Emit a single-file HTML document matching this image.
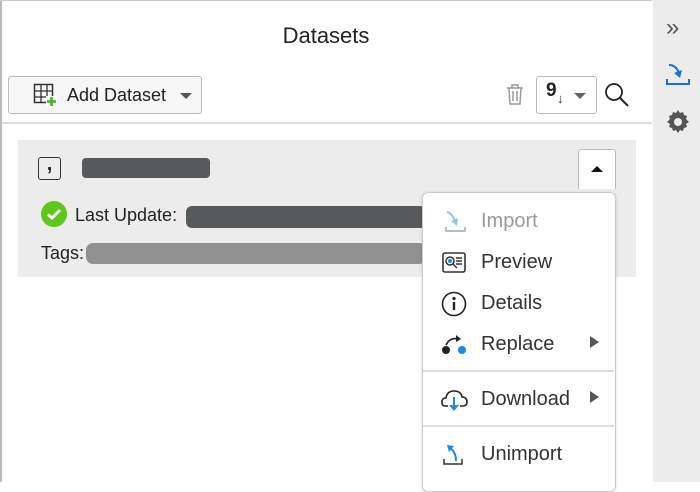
<!DOCTYPE html><html><head><style>
body{margin:0;width:700px;height:482px;overflow:hidden;font-family:"Liberation Sans",sans-serif;color:#222;background:#fff;position:relative}
.a{position:absolute}
.side{left:653px;top:0;width:47px;height:482px;background:#ececec}
.mi{position:absolute;left:58px;font-size:20px;color:#333}
.ic{position:absolute;left:18px}
</style></head><body>
<div class="a" style="left:0;top:0;width:2px;height:482px;background:#bbb"></div>
<div class="a" style="left:0;top:0;width:652px;height:1px;background:#ccc"></div>
<div class="a" style="left:0;top:23px;width:652px;text-align:center;font-size:22px;color:#222">Datasets</div>
<div class="a" style="left:8px;top:76px;width:192px;height:36px;border:1px solid #bbb;border-radius:3px;background:#f6f6f6"></div>
<svg class="a" style="left:33px;top:83px" width="26" height="24"><rect x="1.5" y="1.5" width="18" height="18" fill="none" stroke="#333" stroke-width="1.5"/><path d="M1 8H20M1 14H20M8 1V20M14 1V20" stroke="#333" stroke-width="1.3"/><rect x="13" y="13" width="11" height="10" fill="#fff"/><path d="M18.5 14V23M14 18.5H23" stroke="#3bb818" stroke-width="2.6"/></svg>
<div class="a" style="left:67px;top:85px;font-size:18px;color:#222">Add Dataset</div>
<div class="a" style="left:180px;top:93px;border:6px solid transparent;border-top:6px solid #555"></div>
<svg class="a" style="left:505px;top:83px" width="20" height="23"><path d="M2 5H18M7 5V2H13V5M4 5L5 21H15L16 5M8 8V18M12 8V18" fill="none" stroke="#999" stroke-width="1.5"/></svg>
<div class="a" style="left:536px;top:76px;width:59px;height:36px;border:1px solid #bbb;border-radius:3px"></div>
<div class="a" style="left:546px;top:80px;font-size:19px;font-weight:bold">9</div>
<div class="a" style="left:557px;top:91px;font-size:13px;font-weight:bold">↓</div>
<div class="a" style="left:574px;top:93px;border:6px solid transparent;border-top:6px solid #666"></div>
<svg class="a" style="left:604px;top:82px" width="26" height="26"><circle cx="10" cy="10" r="8" fill="none" stroke="#222" stroke-width="1.8"/><path d="M16 16L24 24" stroke="#222" stroke-width="2"/></svg>
<div class="a" style="left:2px;top:122px;width:650px;height:2px;background:#ddd"></div>
<div class="a" style="left:18px;top:140px;width:618px;height:137px;background:#ececec"></div>
<div class="a" style="left:38px;top:157px;width:23px;height:23px;border:1.5px solid #333;border-radius:3px;box-sizing:border-box;font-size:20px;font-weight:bold;text-align:center;line-height:12px">,</div>
<div class="a" style="left:82px;top:158px;width:128px;height:20px;background:#575a5a;border-radius:4px"></div>
<div class="a" style="left:41px;top:201px;width:26px;height:26px;border-radius:50%;background:#5fc61a"></div>
<svg class="a" style="left:41px;top:201px" width="26" height="26"><path d="M7 13.5L11 17L19 9" fill="none" stroke="#fff" stroke-width="3"/></svg>
<div class="a" style="left:75px;top:205px;font-size:18px">Last Update:</div>
<div class="a" style="left:186px;top:206px;width:240px;height:22px;background:#575a5a;border-radius:6px"></div>
<div class="a" style="left:41px;top:243px;font-size:18px">Tags:</div>
<div class="a" style="left:86px;top:243px;width:340px;height:21px;background:#909090;border-radius:7px"></div>
<div class="a" style="left:578px;top:149px;width:38px;height:40px;background:#fff;border:1px solid #bbb;border-bottom:none;border-radius:3px 3px 0 0;box-sizing:border-box"></div>
<div class="a" style="left:591px;top:166px;border:6px solid transparent;border-bottom:6px solid #111;border-top:none"></div>
<div class="a" style="left:422px;top:192px;width:194px;height:300px;background:#fff;border:1.5px solid #ccc;border-radius:6px;box-sizing:border-box;box-shadow:0 1px 3px rgba(0,0,0,.15)">
<svg class="ic" style="top:16px" width="26" height="26"><path d="M5 18V22H24V18" fill="none" stroke="#9ab" stroke-width="1.5"/><path d="M6 3Q11 4 14 12" fill="none" stroke="#8cc8f0" stroke-width="2"/><path d="M10 12L16 17L17 9Z" fill="#8cc8f0"/></svg>
<div class="mi" style="top:17px;color:#999">Import</div>
<svg class="ic" style="top:57px" width="26" height="26"><rect x="2" y="3" width="22" height="19" rx="2" fill="none" stroke="#333" stroke-width="1.6"/><circle cx="9" cy="11" r="4" fill="none" stroke="#333" stroke-width="1.5"/><circle cx="9" cy="11" r="2" fill="#1e88e5"/><path d="M12 14L16 18M15 8H21M15 11H21M15 14H21" stroke="#333" stroke-width="1.5"/></svg>
<div class="mi" style="top:58px">Preview</div>
<svg class="ic" style="top:98px" width="26" height="26"><circle cx="13" cy="13" r="11.5" fill="none" stroke="#222" stroke-width="1.6"/><path d="M13 11V19" stroke="#222" stroke-width="2.4"/><circle cx="13" cy="7.5" r="1.6" fill="#222"/></svg>
<div class="mi" style="top:99px">Details</div>
<svg class="ic" style="top:139px" width="28" height="26"><circle cx="5" cy="18" r="4" fill="#222"/><circle cx="21" cy="18" r="4" fill="#1e88e5"/><path d="M5 13Q9 5 17 7" fill="none" stroke="#222" stroke-width="1.6"/><path d="M15 3L20 7L15 10Z" fill="#222"/></svg>
<div class="mi" style="top:140px">Replace</div>
<div class="a" style="left:167px;top:143px;border:6px solid transparent;border-left:9px solid #555;border-right:none"></div>
<div class="a" style="left:0;top:177px;width:191px;height:1.5px;background:#ddd"></div>
<svg class="ic" style="top:194px" width="28" height="26"><path d="M7 19H4Q1 19 1 15Q1 11 5 11Q6 4 13 4Q20 4 21 10Q26 10 26 15Q26 19 22 19H19" fill="none" stroke="#222" stroke-width="1.6"/><path d="M13 10V20" stroke="#1e88e5" stroke-width="2"/><path d="M8 18H18L13 24Z" fill="#1e88e5"/></svg>
<div class="mi" style="top:195px">Download</div>
<div class="a" style="left:167px;top:198px;border:6px solid transparent;border-left:9px solid #555;border-right:none"></div>
<div class="a" style="left:0;top:232px;width:191px;height:1.5px;background:#ddd"></div>
<svg class="ic" style="top:249px" width="26" height="26"><path d="M3 17V22H21V17" fill="none" stroke="#333" stroke-width="1.5"/><path d="M15 19Q15 10 9 6" fill="none" stroke="#1e88e5" stroke-width="2"/><path d="M6 3L13 4L8 10Z" fill="#1e88e5"/></svg>
<div class="mi" style="top:250px">Unimport</div>
</div>
<div class="a side"></div>
<div class="a" style="left:666px;top:16px;font-size:24px;line-height:24px;color:#555">»</div>
<svg class="a" style="left:665px;top:62px" width="26" height="26"><path d="M2 17V22H24V17" fill="none" stroke="#1e6fd0" stroke-width="2"/><path d="M4 3Q11 3 14 11" fill="none" stroke="#1e6fd0" stroke-width="2"/><path d="M9 11L15 16L17 8Z" fill="#1e6fd0"/></svg>
<svg class="a" style="left:665px;top:109px" width="26" height="26"><path d="M13 1l2 3 3-1 1 3 3 1-1 3 3 3-3 2 1 3-3 1-1 3-3-1-2 3-2-3-3 1-1-3-3-1 1-3-3-2 3-3-1-3 3-1 1-3 3 1z" fill="#555"/><circle cx="13" cy="13" r="4" fill="#ececec"/></svg>
</body></html>
